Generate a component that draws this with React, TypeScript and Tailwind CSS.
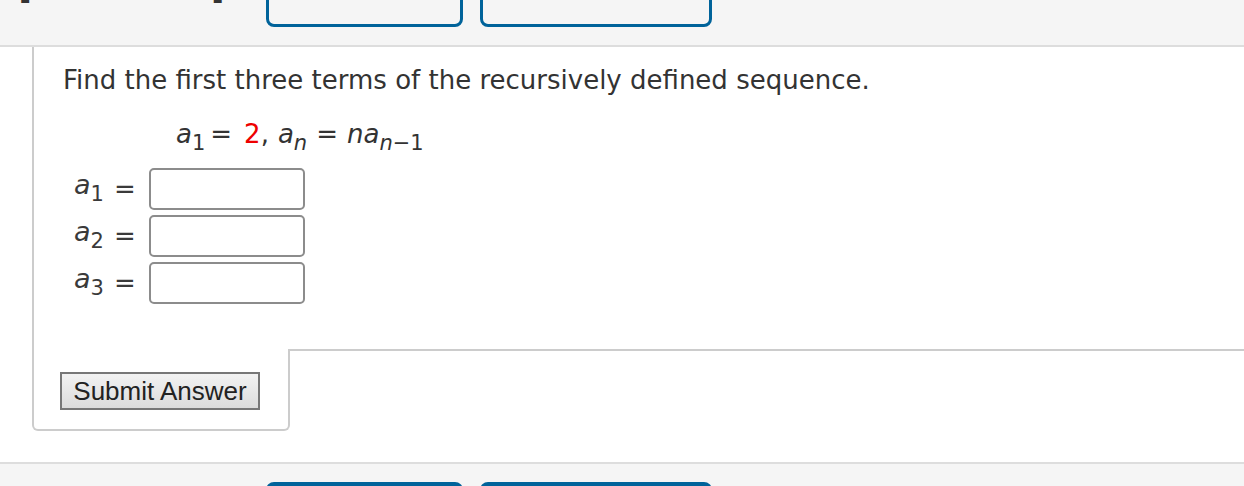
import React from "react";

const Sub = ({ children }: { children: React.ReactNode }) => (
  <span className="text-[21px] not-italic align-[-7px]">{children}</span>
);

const Var = ({ children }: { children: React.ReactNode }) => (
  <span className="italic">{children}</span>
);

const AnswerRow = ({ n }: { n: number }) => (
  <div className="flex items-center h-[42px]">
    <div className="w-[78px] pl-[38px] text-[27px] leading-[42px] text-[#3a3a3a]">
      <Var>a</Var>
      <Sub>{n}</Sub>
    </div>
    <span className="w-[35px] text-[26px] text-[#3a3a3a]">=</span>
    <input
      type="text"
      className="w-[156px] h-[42px] border-2 border-[#8c8c8c] rounded-[5px] bg-white outline-none"
    />
  </div>
);

export default function App() {
  return (
    <div className="w-full h-[486px] overflow-hidden bg-white font-['DejaVu_Sans',Verdana,sans-serif] text-[#333]">
      {/* top bar, mostly scrolled out of view */}
      <div className="h-[47px] bg-[#f5f5f5] border-b-2 border-[#dddddd] flex items-start">
        <div className="w-[266px] pl-[19px] -mt-[25px] text-[26px] font-bold text-[#333] leading-[30px]">
          [<span className="inline-block w-[181px]" />]
        </div>
        <div className="w-[197px] h-[40px] -mt-[13px] border-[3px] border-[#00639a] rounded-b-[8px]" />
        <div className="w-[232px] h-[40px] -mt-[13px] ml-[17px] border-[3px] border-[#00639a] rounded-b-[8px]" />
      </div>

      {/* question box */}
      <div className="h-[415px] pl-[32px]">
        <div className="h-[302px] border-l-2 border-[#cccccc] pl-[29px] pt-[16px]">
          <p className="text-[26px] leading-[34px]">
            Find the first three terms of the recursively defined sequence.
          </p>
          <div className="pl-[113px] mt-[17px] h-[40px] text-[26px] leading-[40px] text-[#333] whitespace-nowrap">
            <Var>a</Var>
            <Sub>1</Sub>
            <span className="inline-block ml-[5px] mr-[12px]">=</span>
            <span className="text-[#ee0000]">2</span>
            <span className="inline-block mr-[9px]">,</span>
            <Var>a</Var>
            <Sub>
              <i>n</i>
            </Sub>
            <span className="inline-block ml-[9px] mr-[9px]">=</span>
            <Var>na</Var>
            <Sub>
              <i>n</i>−1
            </Sub>
          </div>
          <div className="mt-[14px] flex flex-col gap-[5px] -ml-[27px]">
            <AnswerRow n={1} />
            <AnswerRow n={2} />
            <AnswerRow n={3} />
          </div>
        </div>
        <div className="flex h-[82px]">
          <div className="w-[258px] border-l-2 border-r-2 border-b-2 border-[#cccccc] rounded-b-[6px] pl-[26px] pt-[23px]">
            <button className="w-[200px] h-[38px] border-2 border-[#777] bg-gradient-to-b from-[#f2f2f2] to-[#dcdcdc] text-[26px] leading-none text-[#222] font-['Liberation_Sans',Arial,sans-serif]">
              Submit Answer
            </button>
          </div>
          <div className="flex-1 border-t-2 border-[#cccccc]" />
        </div>
      </div>

      {/* next question header */}
      <div className="h-[24px] bg-[#f5f5f5] border-t-2 border-[#dddddd] flex items-start pt-[18px]">
        <div className="w-[197px] h-[40px] ml-[266px] bg-[#00639a] rounded-t-[8px]" />
        <div className="w-[232px] h-[40px] ml-[17px] bg-[#00639a] rounded-t-[8px]" />
      </div>
    </div>
  );
}
